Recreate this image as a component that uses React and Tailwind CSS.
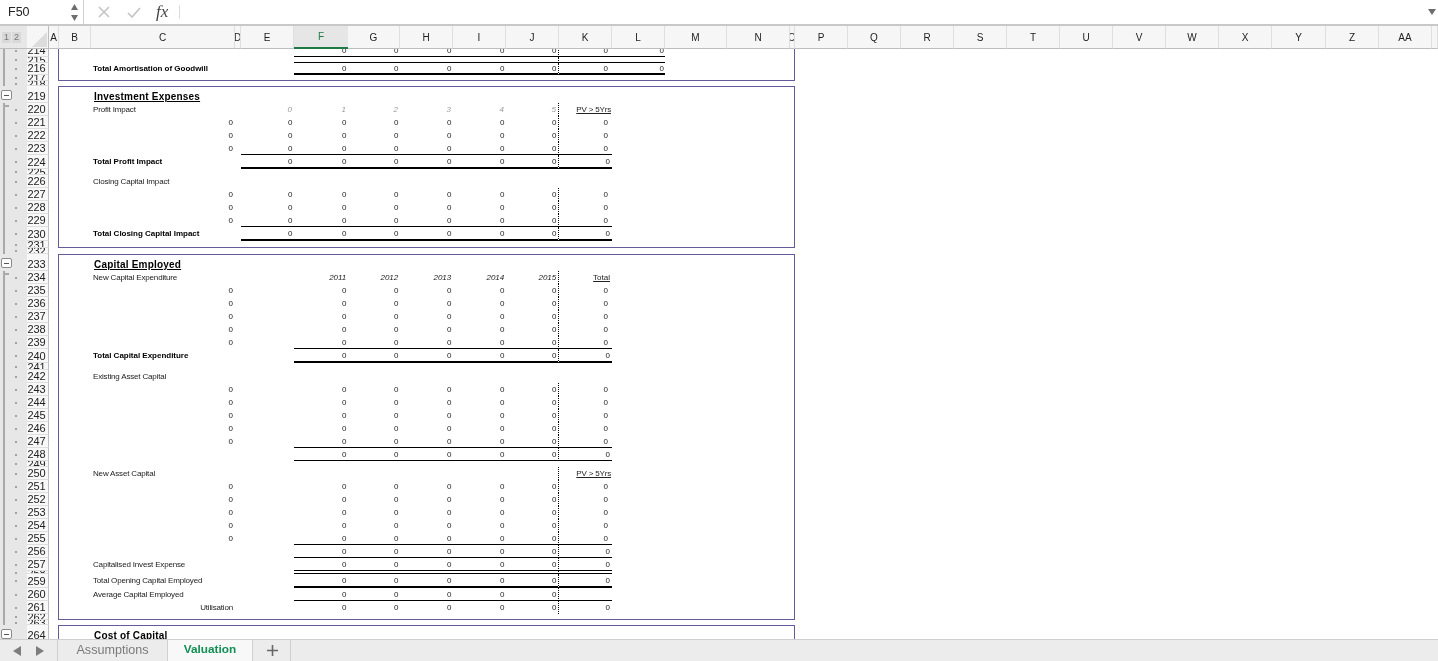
import React from "react";

const COLS = ["A","B","C","D","E","F","G","H","I","J","K","L","M","N","O","P","Q","R","S","T","U","V","W","X","Y","Z","AA",""];
const TEMPLATE = "grid grid-cols-[10px_32px_144px_6px_53px_54px_52px_53px_53px_53px_53px_53px_62px_63px_5px_53px_53px_53px_53px_53px_53px_53px_53px_53px_54px_53px_53px_1fr]";
const BODY = ["A","B","C","D","E","F","G","H","I","J","K","L","M","N","O"];
const EK = ["E","F","G","H","I","J","K"];
const FK = ["F","G","H","I","J","K"];
const FJ = ["F","G","H","I","J"];
const FL = ["F","G","H","I","J","K","L"];

const H = {
  3: "h-[3px]", 5: "h-[5px]", 6: "h-[6px]", 7: "h-[7px]", 12: "h-[12px]", 13: "h-[13px]", 14: "h-[14px]", 17: "h-[17px]",
};

const zeros = (cols) => Object.fromEntries(cols.map((c) => [c, 0]));
const dataRow = (n, extra = {}) => ({ n, h: 13, dot: true, vals: { C: 0, ...zeros(FK) }, ...extra });

const ROWS = [
  { n: 214, h: 13, dot: true, vals: zeros(FL), rule: [FL, 1], first: true },
  { n: 215, h: 6, dot: true, rule: [FL, 1] },
  { n: 216, h: 12, dot: true, bold: "Total Amortisation of Goodwill", vals: zeros(FL), rule: [FL, 2] },
  { n: 217, h: 6, boxBottom: true },
  { n: 218, h: 5, plain: true },
  { n: 219, h: 17, minus: true, heading: "Investment Expenses", boxTop: true },
  { n: 220, h: 13, dot: true, tick: true, label: "Profit Impact", seq: ["0","1","2","3","4","5"], pv: true },
  { n: 221, h: 13, dot: true, vals: { C: 0, ...zeros(EK) } },
  { n: 222, h: 13, dot: true, vals: { C: 0, ...zeros(EK) } },
  { n: 223, h: 13, dot: true, vals: { C: 0, ...zeros(EK) }, rule: [EK, 1] },
  { n: 224, h: 14, top: true, dot: true, bold: "Total Profit Impact", vals: zeros(EK), rule: [EK, 2], kTight: true },
  { n: 225, h: 6 },
  { n: 226, h: 13, label: "Closing Capital Impact" },
  { n: 227, h: 13, dot: true, vals: { C: 0, ...zeros(EK) } },
  { n: 228, h: 13, dot: true, vals: { C: 0, ...zeros(EK) } },
  { n: 229, h: 13, dot: true, vals: { C: 0, ...zeros(EK) }, rule: [EK, 1] },
  { n: 230, h: 14, top: true, dot: true, bold: "Total Closing Capital Impact", vals: zeros(EK), rule: [EK, 2], kTight: true },
  { n: 231, h: 7, boxBottom: true },
  { n: 232, h: 6, plain: true },
  { n: 233, h: 17, minus: true, heading: "Capital Employed", boxTop: true },
  { n: 234, h: 13, dot: true, tick: true, label: "New Capital Expenditure", years: true },
  dataRow(235), dataRow(236), dataRow(237), dataRow(238),
  dataRow(239, { rule: [FK, 1] }),
  { n: 240, h: 14, top: true, dot: true, bold: "Total Capital Expenditure", vals: zeros(FK), rule: [FK, 2], kTight: true },
  { n: 241, h: 7 },
  { n: 242, h: 13, label: "Existing Asset Capital" },
  dataRow(243), dataRow(244), dataRow(245), dataRow(246),
  dataRow(247, { rule: [FK, 1] }),
  { n: 248, h: 13, dot: true, vals: zeros(FK), rule: [FK, 1], kTight: true },
  { n: 249, h: 6 },
  { n: 250, h: 13, dot: true, label: "New Asset Capital", pv: true },
  dataRow(251), dataRow(252), dataRow(253), dataRow(254),
  dataRow(255, { rule: [FK, 1] }),
  { n: 256, h: 13, dot: true, vals: zeros(FK), rule: [FK, 1], kTight: true },
  { n: 257, h: 13, dot: true, label: "Capitalised Invest Expense", vals: zeros(FK), rule: [FK, 1], kTight: true },
  { n: 258, h: 3, dot: true, rule: [FK, 1] },
  { n: 259, h: 14, top: true, dot: true, label: "Total Opening Capital Employed", vals: zeros(FK), rule: [FK, 2], kTight: true },
  { n: 260, h: 13, dot: true, label: "Average Capital Employed", vals: zeros(FJ), rule: [FK, 1] },
  { n: 261, h: 13, dot: true, util: true, vals: zeros(FK), kTight: true },
  { n: 262, h: 6, boxBottom: true },
  { n: 263, h: 5, plain: true },
  { n: 264, h: 17, minus: true, heading: "Cost of Capital", boxTop: true },
];

const YEARS = { F: "2011", G: "2012", H: "2013", I: "2014", J: "2015" };
const SEQ = ["E", "F", "G", "H", "I", "J"];

function Gutter({ row }) {
  return (
    <div className="relative w-[27px] shrink-0 bg-[#e7e7e7] overflow-hidden">
      {row.minus ? (
        <div className="absolute left-[1px] top-[4px] w-[11px] h-[10px] rounded-[2px] border border-[#8a8a8a] bg-white flex items-center justify-center">
          <div className="w-[5px] h-[1px] bg-[#555]" />
        </div>
      ) : (
        <div className="absolute left-[3px] inset-y-0 w-[2px] bg-[#a9a9a9]" />
      )}
      {row.tick && <div className="absolute left-[3px] top-[2px] w-[6px] h-[2px] bg-[#a9a9a9]" />}
      {!row.minus && (
        <div className="h-full flex items-center">
          <div className="ml-[15px] w-[2px] h-[2px] bg-[#a0a0a0]" />
        </div>
      )}
    </div>
  );
}

function RowLabel({ row }) {
  const small = row.h < 12;
  return (
    <div
      className={`w-[22px] shrink-0 flex justify-center overflow-hidden bg-[#f8f8f8] border-r border-b border-r-[#bdbdbd] border-b-[#dedede] text-[11px] leading-[13px] tracking-[-0.2px] text-[#222] ${
        small ? "items-center" : "items-end"
      }`}
    >
      <span className="translate-y-[1px] -translate-x-[1px]">{row.n}</span>
    </div>
  );
}

function Cell({ col, row }) {
  const val = row.vals && row.vals[col];
  const inRule = row.rule && row.rule[0].includes(col);
  const inBox = col !== "A";
  const dotted = col === "J" && row.dot;
  let content = null;
  if (col === "C" && (row.bold || row.label || row.heading)) {
    content = row.heading ? (
      <span className="text-[10px] font-bold underline underline-offset-[1px] tracking-[0.2px] text-black whitespace-nowrap pl-[3px]">{row.heading}</span>
    ) : row.bold ? (
      <span className="font-bold text-black whitespace-nowrap pl-[2px] text-[8px] tracking-[-0.02px]">{row.bold}</span>
    ) : (
      <span className="whitespace-nowrap pl-[2px] tracking-[-0.17px]">{row.label}</span>
    );
  } else if (col === "C" && row.util) {
    content = <span className="ml-auto pr-[2px] tracking-[-0.17px]">Utilisation</span>;
  } else if (row.seq && SEQ.includes(col)) {
    content = <span className="ml-auto pr-[2px] italic text-[#9a9a9a]">{row.seq[SEQ.indexOf(col)]}</span>;
  } else if (row.years && YEARS[col]) {
    content = <span className="ml-auto pr-[2px] italic tracking-[-0.1px]">{YEARS[col]}</span>;
  } else if (row.years && col === "K") {
    content = <span className="ml-auto pr-[2px] underline">Total</span>;
  } else if (row.pv && col === "K") {
    content = <span className="ml-auto pr-[1px] underline whitespace-nowrap tracking-[-0.17px]">PV &gt; 5Yrs</span>;
  } else if (val !== undefined) {
    const pad = col === "K" ? (row.kTight ? "pr-[2px]" : "pr-[4px]") : col === "C" ? "pr-[2px]" : col === "L" ? "pr-[1px]" : "pr-[1.5px]";
    content = <span className={`ml-auto ${pad}`}>{val}</span>;
  }
  return (
    <div
      className={`relative flex overflow-hidden text-[8px] leading-[13px] text-[#222] ${row.top ? "items-start" : row.h < 12 ? "items-center" : "items-end"} ${
        col === "A" && row.boxSide ? "border-r border-r-[#655a9c]" : ""
      } ${col === "O" && row.boxSide ? "border-r border-r-[#655a9c]" : ""} ${
        dotted ? "border-r border-dotted border-r-black" : ""
      }`}
    >
      {content}
      {inRule && <div className={`absolute inset-x-0 bottom-0 bg-black ${row.rule[1] === 2 ? "h-[2px]" : "h-[1px]"}`} />}
      {row.boxTop && inBox && <div className="absolute inset-x-0 top-0 h-[1px] bg-[#655a9c]" />}
      {row.boxBottom && inBox && <div className="absolute inset-x-0 bottom-0 h-[1px] bg-[#655a9c]" />}
    </div>
  );
}

function SheetRow({ row }) {
  const r = { ...row, boxSide: !row.plain };
  return (
    <div className={`flex shrink-0 ${H[row.h]} ${row.first ? "-mt-[5px]" : ""}`}>
      <Gutter row={row} />
      <RowLabel row={row} />
      <div className={`${TEMPLATE} flex-1`}>
        {BODY.map((c) => (
          <Cell key={c} col={c} row={r} />
        ))}
      </div>
    </div>
  );
}

function FormulaBar() {
  return (
    <div className="h-[24px] shrink-0 flex items-center bg-white">
      <div className="w-[66px] pl-[8px] text-[12.5px] text-[#222] shrink-0">F50</div>
      <div className="w-[16px] flex flex-col items-center gap-[5px] shrink-0">
        <svg width="7" height="6" viewBox="0 0 7 6"><path d="M3.5 0 L7 6 L0 6 Z" fill="#6d6d6d" /></svg>
        <svg width="7" height="6" viewBox="0 0 7 6"><path d="M3.5 6 L7 0 L0 0 Z" fill="#6d6d6d" /></svg>
      </div>
      <div className="w-[1px] h-[24px] bg-[#d0d0d0] ml-[1px]" />
      <div className="ml-[13px] w-[14px] flex justify-center">
        <svg width="12" height="12" viewBox="0 0 12 12"><path d="M1 1 L11 11 M11 1 L1 11" stroke="#c4c4c4" strokeWidth="1.6" /></svg>
      </div>
      <div className="ml-[15px] w-[16px] flex justify-center">
        <svg width="14" height="11" viewBox="0 0 14 11"><path d="M1 6 L5 10 L13 1" stroke="#c4c4c4" strokeWidth="1.6" fill="none" /></svg>
      </div>
      <div className="ml-[14px] w-[18px] text-[17px] italic text-[#444] [font-family:'Liberation_Serif',serif]">fx</div>
      <div className="ml-[5px] w-[1px] h-[14px] bg-[#dcdcdc]" />
      <div className="flex-1" />
      <svg className="mr-[2px]" width="8" height="6" viewBox="0 0 8 6"><path d="M0 0 L8 0 L4 6 Z" fill="#6d6d6d" /></svg>
    </div>
  );
}

function ColumnHeader() {
  return (
    <div className="relative z-10 h-[23px] shrink-0 flex bg-[#f6f6f6]">
      <div className="w-[27px] shrink-0 bg-[#e7e7e7] flex items-center pl-[2px] gap-[1px] border-b border-b-[#bdbdbd]">
        <div className="w-[9px] h-[11px] bg-[#d9d9d9] text-[#777] text-[9px] leading-[11px] text-center">1</div>
        <div className="w-[9px] h-[11px] bg-[#d9d9d9] text-[#777] text-[9px] leading-[11px] text-center">2</div>
      </div>
      <div className="relative w-[22px] shrink-0 bg-[#f6f6f6] border-r border-b border-r-[#bdbdbd] border-b-[#bdbdbd] overflow-hidden">
        <svg className="absolute right-[1px] bottom-[1px]" width="15" height="15" viewBox="0 0 15 15"><path d="M15 0 L15 15 L0 15 Z" fill="#dcdcdc" /></svg>
      </div>
      <div className={`${TEMPLATE} flex-1`}>
        {COLS.map((c) =>
          c === "F" ? (
            <div key={c} className="flex items-center justify-center bg-[#e6e6e6] border-b-2 border-b-[#1d7a46] text-[10px] text-[#1d7a46]">F</div>
          ) : (
            <div key={c} className="flex items-center justify-center overflow-hidden border-r border-b border-r-[#dfdfdf] border-b-[#bdbdbd] text-[10px] text-[#222]">{c}</div>
          )
        )}
      </div>
    </div>
  );
}

function TabBar() {
  return (
    <div className="relative z-10 h-[22px] shrink-0 flex bg-[#ececec] border-t border-t-[#cfcfcf]">
      <div className="w-[58px] flex items-center shrink-0 pl-[13px] gap-[15px] border-r border-r-[#d0d0d0]">
        <svg width="8" height="10" viewBox="0 0 8 10"><path d="M8 0 L8 10 L0 5 Z" fill="#7d7d7d" /></svg>
        <svg width="8" height="10" viewBox="0 0 8 10"><path d="M0 0 L0 10 L8 5 Z" fill="#7d7d7d" /></svg>
      </div>
      <div className="w-[109px] flex items-center justify-center shrink-0 text-[12.6px] text-[#7a7a7a]">Assumptions</div>
      <div className="w-[86px] flex items-center justify-center shrink-0 bg-[#f8f8f8] border-x border-x-[#d0d0d0] text-[11.8px] font-bold text-[#0f8f53] pb-[1px]">Valuation</div>
      <div className="w-[38px] flex items-center justify-center shrink-0 border-r border-r-[#d0d0d0] pl-[2px]">
        <svg width="11" height="11" viewBox="0 0 11 11"><path d="M5.5 0 V11 M0 5.5 H11" stroke="#666" strokeWidth="1.6" /></svg>
      </div>
    </div>
  );
}

export default function App() {
  return (
    <div className="w-[1438px] h-[661px] flex flex-col overflow-hidden bg-white [font-family:'Liberation_Sans',Arial,sans-serif] [will-change:transform]">
      <FormulaBar />
      <div className="h-[2px] shrink-0 bg-[#c8c8c8]" />
      <ColumnHeader />
      <div className="flex-1 min-h-0 flex flex-col overflow-hidden">
        {ROWS.map((r) => (
          <SheetRow key={r.n} row={r} />
        ))}
      </div>
      <TabBar />
    </div>
  );
}
